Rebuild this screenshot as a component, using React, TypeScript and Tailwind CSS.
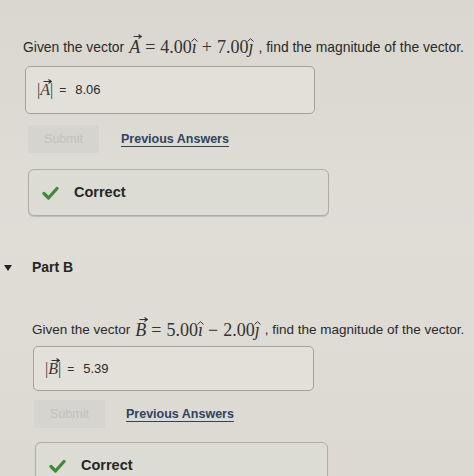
import React from 'react';

const sans = { fontFamily: '"Liberation Sans", Arial, sans-serif' };
const serif = { fontFamily: '"Liberation Serif", "Times New Roman", serif' };

function Vec({ letter, size }: { letter: string; size: 'lg' | 'md' }) {
  return (
    <span className="relative inline-block italic" style={serif}>
      {letter}
      <svg
        className={size === 'lg' ? 'absolute left-[4px] top-[-2px]' : 'absolute left-[3px] top-[-1px]'}
        width="9"
        height="5"
        viewBox="0 0 9 5"
      >
        <path d="M0.5 2.5 H8 M5.5 0.5 L8.3 2.5 L5.5 4.5" fill="none" stroke="#333" strokeWidth="1.1" />
      </svg>
    </span>
  );
}

function Hat({ ch }: { ch: string }) {
  return (
    <span className="relative inline-block italic" style={serif}>
      {ch}
      <svg className="absolute left-[-1px] top-[2px]" width="7" height="4" viewBox="0 0 7 4">
        <path d="M0.5 3.5 L3.5 0.7 L6.5 3.5" fill="none" stroke="#333" strokeWidth="1" />
      </svg>
    </span>
  );
}

function Question({ name, a, op, b, size }: { name: string; a: string; op: string; b: string; size: string }) {
  return (
    <p className={`flex items-center ${size} leading-[22px] text-[#2a2a2a] whitespace-nowrap`} style={sans}>
      <span>Given the vector</span>
      <span className="ml-[5px] text-[18px] leading-[22px] text-[#333]" style={serif}>
        <Vec letter={name} size="lg" />
        <span className="mx-[5px]">=</span>
        {a}
        <Hat ch="ı" />
        <span className="mx-[5px]">{op}</span>
        {b}
        <Hat ch="ȷ" />
      </span>
      <span className="ml-[5px]">, find the magnitude of the vector.</span>
    </p>
  );
}

function AnswerBox({ name, value, className }: { name: string; value: string; className: string }) {
  return (
    <div
      className={`flex items-center gap-[6px] rounded-[5px] border border-[#a3a19a] bg-[#e2e0d9] pl-[11px] ${className}`}
    >
      <span className="text-[16px] leading-[20px] text-[#3a3a3a]" style={serif}>
        |<Vec letter={name} size="md" />|
      </span>
      <span className="text-[12px] text-[#333]" style={sans}>=</span>
      <span className="ml-[3px] text-[13px] text-[#2c2c2c]" style={sans}>{value}</span>
    </div>
  );
}

function SubmitRow({ gap }: { gap: string }) {
  return (
    <div className={`flex items-center ${gap}`}>
      <div
        className="flex h-[28px] w-[71px] items-center justify-center rounded-[2px] bg-[#d5d4ce] text-[12.5px] text-[#c3c2bc]"
        style={sans}
      >
        Submit
      </div>
      <span
        className="text-[12.5px] font-bold text-[#2f4460] underline decoration-[1px] underline-offset-[3px]"
        style={sans}
      >
        Previous Answers
      </span>
    </div>
  );
}

function Correct({ className }: { className: string }) {
  return (
    <div
      className={`flex items-center gap-[15px] rounded-[6px] border border-[#afada6] bg-[#dcdbd4] pl-[13px] shadow-[0_1px_1px_rgba(0,0,0,0.15)] ${className}`}
    >
      <svg width="17" height="14" viewBox="0 0 17 14">
        <path d="M2 7.5 L6.5 12 L15 2.5" fill="none" stroke="#3f8a3a" strokeWidth="3.2" strokeLinecap="round" strokeLinejoin="round" />
      </svg>
      <span className="text-[14.5px] font-bold text-[#262626]" style={sans}>Correct</span>
    </div>
  );
}

export default function App() {
  return (
    <div className="h-[476px] w-[474px] overflow-hidden bg-gradient-to-b from-[#d9d7d0] via-[#dfddd6] to-[#dbd9d2]">
      <div className="pl-[23px] pt-[36px]">
        <Question name="A" a="4.00" op="+" b="7.00" size="text-[13.9px]" />
        <AnswerBox name="A" value="8.06" className="mt-[8px] h-[48px] w-[290px] ml-[2px]" />
        <div className="ml-[5px] mt-[11px]">
          <SubmitRow gap="gap-[22px]" />
        </div>
        <Correct className="ml-[5px] mt-[16px] h-[47px] w-[301px]" />
      </div>

      <div className="mt-[41px] flex items-center">
        <svg className="ml-[4px]" width="8" height="6" viewBox="0 0 8 6">
          <path d="M0 0 L8 0 L4 6 Z" fill="#222" />
        </svg>
        <span className="ml-[20px] text-[14px] font-bold text-[#262626]" style={sans}>Part B</span>
      </div>

      <div className="pl-[32px] pt-[41px]">
        <Question name="B" a="5.00" op="−" b="2.00" size="text-[13.5px]" />
        <AnswerBox name="B" value="5.39" className="mt-[5px] h-[45px] w-[281px] ml-[1px]" />
        <div className="ml-[2px] mt-[9px]">
          <SubmitRow gap="gap-[21px]" />
        </div>
        <Correct className="ml-[3px] mt-[14px] h-[47px] w-[293px]" />
      </div>
    </div>
  );
}
